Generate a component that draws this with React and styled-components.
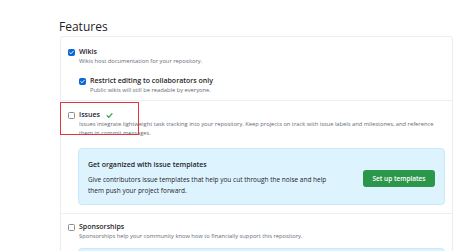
import React from "react";
import styled, { createGlobalStyle } from "styled-components";

const GlobalStyle = createGlobalStyle`
  body {
    margin: 0;
    background: #ffffff;
    font-family: "Open Sans", "Liberation Sans", sans-serif;
    color: #1f2328;
  }
`;

const Page = styled.div`
  padding: 18px 0 0 60px;
  width: 393px;
`;

const Heading = styled.h2`
  margin: 0 0 0 -1px;
  font-size: 12px;
  font-weight: 400;
  line-height: 18px;
  color: #1f2328;
`;

const Panel = styled.div`
  border: 1px solid #ececec;
  border-radius: 3px;
  background: #fff;
`;

const Section = styled.div`
  position: relative;
  padding: ${(props) => props.$pad || "9px 7px 8px"};
  border-top: ${(props) => (props.$first ? "none" : "1px solid #eeeeee")};
`;

const Row = styled.div`
  display: flex;
  align-items: flex-start;
  gap: 4px;
  margin-left: ${(props) => (props.$indent ? "11px" : "0")};
  margin-top: ${(props) => (props.$indent ? "10px" : "0")};
`;

const Box = styled.span`
  flex-shrink: 0;
  width: 7px;
  height: 7px;
  margin-top: 1.5px;
  box-sizing: border-box;
  border-radius: 1.5px;
  border: 1px solid ${(props) => (props.$checked ? "#0969da" : "#8c8c8c")};
  background: ${(props) => (props.$checked ? "#0969da" : "#fff")};
  display: flex;
  align-items: center;
  justify-content: center;
`;

const Body = styled.div`
  flex: 1;
`;

const Label = styled.div`
  font-size: 7px;
  font-weight: 600;
  line-height: 10px;
  display: flex;
  align-items: center;
  gap: 6px;
`;

const Note = styled.div`
  font-size: 5.75px;
  line-height: 9px;
  color: #656d76;
`;

const Callout = styled.div`
  display: flex;
  align-items: center;
  margin: ${(props) => props.$gap || "10px"} 0 0 10px;
  padding: 10px 9px 8px 9px;
  background: #ddf4ff;
  border: 1px solid #c8e8fb;
  border-radius: 4px;
  min-height: 35px;
`;

const CalloutText = styled.div`
  width: 254px;
`;

const CalloutTitle = styled.div`
  font-size: 7px;
  font-weight: 600;
  line-height: 11px;
  margin-bottom: 4px;
`;

const CalloutBody = styled.div`
  font-size: 6.5px;
  line-height: 11px;
  color: #1f2328;
`;

const Button = styled.button`
  margin-left: auto;
  flex-shrink: 0;
  width: 72px;
  height: 17px;
  padding: 0;
  border: none;
  border-radius: 3px;
  background: #2c974b;
  color: #fff;
  font-family: inherit;
  font-size: 6.5px;
  font-weight: 600;
  margin-bottom: -2px;
`;

const Highlight = styled.div`
  position: absolute;
  left: -1px;
  top: 1px;
  width: 77px;
  height: 31px;
  border: 1.5px solid #e3333e;
  pointer-events: none;
`;

const Tick = ({ color = "#fff", size = 5 }) => (
  <svg width={size} height={size} viewBox="0 0 10 10">
    <path
      d="M1.5 5.2 L4 7.6 L8.6 2.4"
      fill="none"
      stroke={color}
      strokeWidth="1.8"
      strokeLinecap="round"
      strokeLinejoin="round"
    />
  </svg>
);

const Check = ({ checked }) => (
  <Box $checked={checked}>{checked && <Tick />}</Box>
);

export default function App() {
  return (
    <Page>
      <GlobalStyle />
      <Heading>Features</Heading>
      <Panel>
        <Section $first $pad="10px 7px 5px">
          <Row>
            <Check checked />
            <Body>
              <Label>Wikis</Label>
              <Note>Wikis host documentation for your repository.</Note>
            </Body>
          </Row>
          <Row $indent>
            <Check checked />
            <Body>
              <Label>Restrict editing to collaborators only</Label>
              <Note>Public wikis will still be readable by everyone.</Note>
            </Body>
          </Row>
        </Section>

        <Section $pad="9px 7px 8px">
          <Highlight />
          <Row>
            <Check />
            <Body>
              <Label>
                Issues <Tick color="#2da44e" size={7} />
              </Label>
              <Note>
                Issues integrate lightweight task tracking into your repository.
                Keep projects on track with issue labels and milestones, and
                reference them in commit messages.
              </Note>
            </Body>
          </Row>
          <Callout>
            <CalloutText>
              <CalloutTitle>Get organized with issue templates</CalloutTitle>
              <CalloutBody>
                Give contributors issue templates that help you cut through the
                noise and help them push your project forward.
              </CalloutBody>
            </CalloutText>
            <Button>Set up templates</Button>
          </Callout>
        </Section>

        <Section $pad="8px 7px 8px">
          <Row>
            <Check />
            <Body>
              <Label>Sponsorships</Label>
              <Note>
                Sponsorships help your community know how to financially support
                this repository.
              </Note>
            </Body>
          </Row>
          <Callout $gap="7px" />
        </Section>
      </Panel>
    </Page>
  );
}
